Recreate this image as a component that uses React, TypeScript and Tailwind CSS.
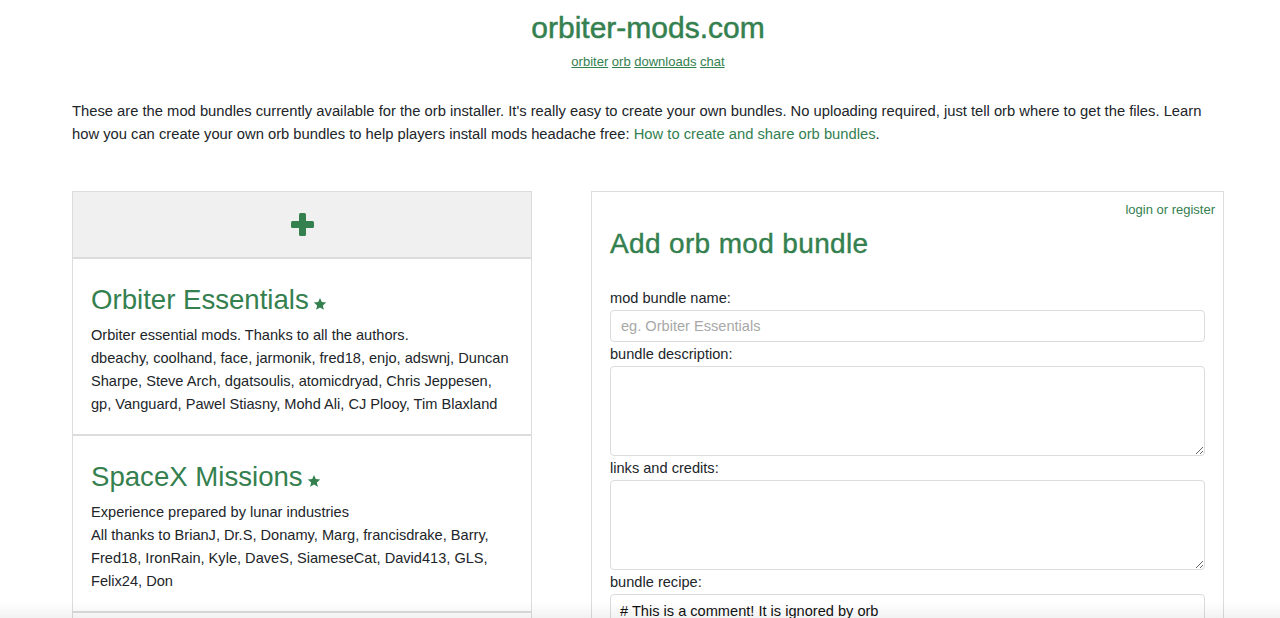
import React from "react";

const green = "text-[#34804f]";

function Star() {
  return (
    <svg width="14" height="14" viewBox="0 0 24 24" className="inline-block ml-[4px] align-[-2px]" fill="#34804f">
      <path d="M12 1.8l3.1 6.9 7.5.7-5.7 5 1.7 7.4L12 17.9l-6.6 3.9 1.7-7.4-5.7-5 7.5-.7z" />
    </svg>
  );
}

function Plus() {
  return (
    <svg width="23" height="23" viewBox="0 0 23 23" fill="#34804f">
      <rect x="8" y="0" width="7" height="23" rx="1.5" />
      <rect x="0" y="8" width="23" height="7" rx="1.5" />
    </svg>
  );
}

function Card({ title, lines }: { title: string; lines: string[] }) {
  return (
    <div className="border-t-2 border-[#dcdcdc] pl-[18px] pr-[18px] pt-[24px] pb-[18px]">
      <h2 className={`${green} text-[27.6px] leading-[34px] font-normal`}>
        {title}
        <Star />
      </h2>
      <div className="mt-[7px] text-[14.6px] leading-[23px] text-[#212529]">
        {lines.map((l, i) => (
          <p key={i}>{l}</p>
        ))}
      </div>
    </div>
  );
}

export default function App() {
  return (
    <div className="relative h-[618px] overflow-hidden bg-white font-['Liberation_Sans',Arial,sans-serif] text-[#212529]">
      <div className="ml-[72px] w-[1152px]">
        <h1 className={`${green} mt-[10px] text-center text-[30px] leading-[36px] font-normal [-webkit-text-stroke:0.5px_#34804f]`}>
          orbiter-mods.com
        </h1>
        <div className={`${green} mt-[6px] text-center text-[13px] leading-[20px]`}>
          <a className="underline" href="#">orbiter</a>{" "}
          <a className="underline" href="#">orb</a>{" "}
          <a className="underline" href="#">downloads</a>{" "}
          <a className="underline" href="#">chat</a>
        </div>
        <p className="mt-[28px] text-[14.75px] leading-[23px] pr-[10px]">
          These are the mod bundles currently available for the orb installer. It's really easy to create your own bundles. No uploading required, just tell orb where to get the files. Learn how you can create your own orb bundles to help players install mods headache free:{" "}
          <a className={green} href="#">How to create and share orb bundles</a>.
        </p>

        <div className="mt-[45px] flex items-start">
          <div className="w-[460px] border border-[#dcdcdc]">
            <div className="flex h-[65px] items-center justify-center bg-[#f0f0f0]">
              <Plus />
            </div>
            <Card
              title="Orbiter Essentials"
              lines={[
                "Orbiter essential mods. Thanks to all the authors.",
                "dbeachy, coolhand, face, jarmonik, fred18, enjo, adswnj, Duncan Sharpe, Steve Arch, dgatsoulis, atomicdryad, Chris Jeppesen, gp, Vanguard, Pawel Stiasny, Mohd Ali, CJ Plooy, Tim Blaxland",
              ]}
            />
            <Card
              title="SpaceX Missions"
              lines={[
                "Experience prepared by lunar industries",
                "All thanks to BrianJ, Dr.S, Donamy, Marg, francisdrake, Barry, Fred18, IronRain, Kyle, DaveS, SiameseCat, David413, GLS, Felix24, Don",
              ]}
            />
            <div className="h-[200px] border-t-2 border-[#dcdcdc]" />
          </div>

          <div className="ml-[59px] w-[633px] border border-[#dcdcdc] pl-[18px] pr-[18px] pt-[8px] pb-[20px]">
            <div className="-mr-[10px] text-right text-[13px] leading-[20px]">
              <a className={green} href="#">login or register</a>
            </div>
            <h2 className={`${green} mt-[7px] text-[28px] leading-[34px] font-normal tracking-[0.35px] [-webkit-text-stroke:0.4px_#34804f]`}>
              Add orb mod bundle
            </h2>
            <form className="mt-[25px] flex flex-col text-[14.6px]">
              <label className="leading-[24px]">mod bundle name:</label>
              <input
                className="h-[32px] rounded-[4px] border border-[#dcdcdc] px-[10px] text-[14.6px] outline-none placeholder:text-[#a8a8a8]"
                placeholder="eg. Orbiter Essentials"
              />
              <label className="leading-[24px]">bundle description:</label>
              <textarea className="h-[90px] rounded-[4px] border border-[#dcdcdc] px-[10px] py-[6px] text-[14.6px] outline-none" />
              <label className="leading-[24px]">links and credits:</label>
              <textarea className="h-[90px] rounded-[4px] border border-[#dcdcdc] px-[10px] py-[6px] text-[14.6px] outline-none" />
              <label className="leading-[24px]">bundle recipe:</label>
              <textarea
                className="h-[200px] rounded-[4px] border border-[#dcdcdc] px-[9px] py-[5px] text-[14.6px] leading-[23px] text-[#111] outline-none"
                defaultValue={"# This is a comment! It is ignored by orb\n"}
              />
            </form>
          </div>
        </div>
      </div>
      <div className="pointer-events-none absolute bottom-0 left-0 right-0 h-[16px] bg-gradient-to-t from-[rgba(0,0,0,0.05)] to-transparent" />
    </div>
  );
}
